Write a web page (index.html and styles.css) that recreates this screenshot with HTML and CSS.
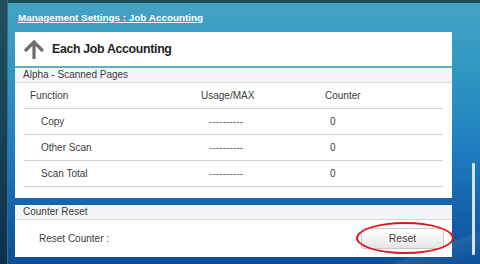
FILE: index.html
```html
<!DOCTYPE html>
<html>
<head>
<meta charset="utf-8">
<link rel="stylesheet" href="styles.css">
</head>
<body>
<div class="app">
  <div class="side"></div>
  <div class="main">
    <div class="crumb"><a class="crumb-link">Management Settings : Job Accounting</a></div>
    <div class="card">
      <div class="card-head">
        <svg class="up" width="22" height="20" viewBox="0 0 22 20"><path d="M11 19V3M2 11l9-9 9 9" fill="none" stroke="#6e6e6e" stroke-width="3.2" stroke-linecap="butt" stroke-linejoin="miter"/></svg>
        <span class="card-title">Each Job Accounting</span>
      </div>
      <div class="sec-head">Alpha - Scanned Pages</div>
      <div class="sec-body">
        <div class="row hdr"><span class="c1">Function</span><span class="c2">Usage/MAX</span><span class="c3">Counter</span></div>
        <div class="row"><span class="c1 ind">Copy</span><span class="c2 dash">----------</span><span class="c3 num">0</span></div>
        <div class="row"><span class="c1 ind">Other Scan</span><span class="c2 dash">----------</span><span class="c3 num">0</span></div>
        <div class="row"><span class="c1 ind">Scan Total</span><span class="c2 dash">----------</span><span class="c3 num">0</span></div>
      </div>
    </div>
    <div class="card card2">
      <div class="sec-head">Counter Reset</div>
      <div class="reset-body">
        <span class="reset-label">Reset Counter :</span>
        <div class="btn-wrap">
          <button class="btn">Reset</button>
          <span class="ring"></span>
        </div>
      </div>
    </div>
    <div class="scroll"></div>
  </div>
</div>
</body>
</html>
```
FILE: styles.css
```css
html, body { margin: 0; padding: 0; }
body { width: 480px; height: 264px; overflow: hidden; font-family: "Liberation Sans", Arial, sans-serif; }
.app { display: flex; width: 480px; height: 264px; }
.side { width: 7px; background: linear-gradient(180deg, #22505e 0%, #1a4658 40%, #0e2f4e 100%); border-right: 1px solid #3a6f80; }
.main { flex: 1; position: relative; padding: 0 28px 0 7px; border-top: 3px solid #1f4b58;
  background:
    linear-gradient(160deg, rgba(255,255,255,0) 0%, rgba(255,255,255,0) 92%, rgba(255,255,255,0.08) 93%, rgba(255,255,255,0) 100%),
    linear-gradient(180deg, #43a3c2 0%, #3198c2 25%, #1f7fc0 55%, #1361ab 80%, #0b4f96 100%);
}
.crumb { height: 29px; display: flex; align-items: center; padding-left: 3px; }
.crumb-link { color: #fff; font-size: 9.9px; font-weight: bold; text-decoration: underline; margin-top: -1px; }
.card { background: #5eaed0; }
.card-head { height: 34px; background: #fff; display: flex; align-items: center; padding-left: 8px; margin-bottom: 2px; }
.up { margin-right: 7px; margin-top: 1px; }
.card-title { font-size: 12.3px; font-weight: bold; color: #222; letter-spacing: -0.3px; }
.sec-head { height: 14px; background: #f4f5f9; border-bottom: 1px solid #d8d9dd; font-size: 10px; color: #3a3a3a; padding-left: 8px; line-height: 14px; }
.sec-body { background: #fff; padding: 0 9px 11px 9px; }
.row { height: 25px; border-bottom: 1px solid #d2d2d2; display: flex; align-items: center; font-size: 10px; color: #3c3c3c; }
.c1 { width: 171px; padding-left: 6px; }
.c1.ind { padding-left: 17px; width: 160px; }
.c2 { width: 124px; }
.c2.dash { padding-left: 8px; width: 116px; font-size: 10px; color: #666; letter-spacing: 0.1px; }
.c3.num { padding-left: 5px; }
.card2 { margin-top: 7px; background: #fff; }
.reset-body { height: 37px; display: flex; align-items: center; justify-content: space-between; padding: 0 8px 0 24px; }
.reset-label { font-size: 10px; color: #3c3c3c; }
.btn-wrap { position: relative; margin-top: -1px; }
.btn { width: 83px; height: 21px; border: 1px solid #c9c9c9; border-radius: 2px; background: linear-gradient(180deg, #ffffff 0%, #f1f1f1 60%, #e4e4e4 100%); font-family: "Liberation Sans", Arial, sans-serif; font-size: 10.5px; color: #444; padding: 0; display: block; }
.ring { position: absolute; left: -5px; top: -6px; width: 94px; height: 28px; border: 2.5px solid #e0151c; border-radius: 50%; }
.scroll { position: absolute; right: 5px; top: 160px; width: 3px; height: 92px; background: #d7e3ef; border-radius: 1px; }
```
